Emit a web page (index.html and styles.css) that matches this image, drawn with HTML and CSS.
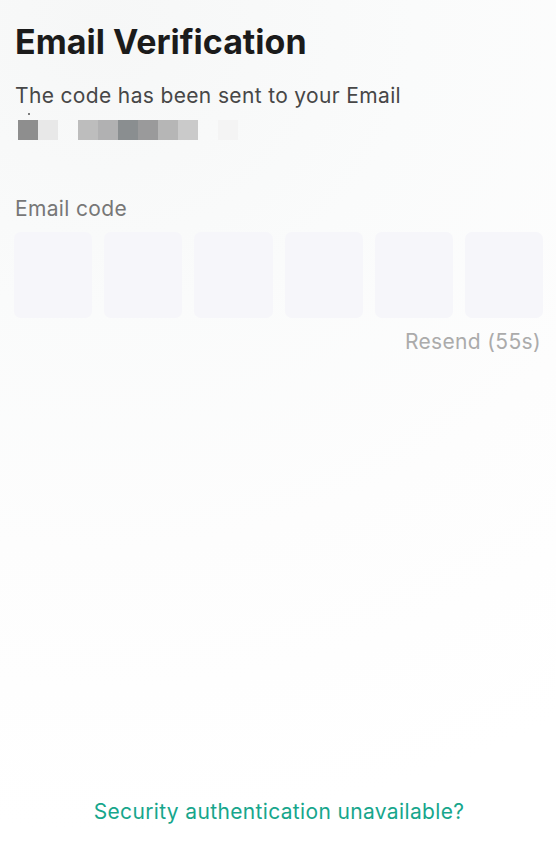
FILE: index.html
```html
<!DOCTYPE html>
<html lang="en">
<head>
<meta charset="utf-8">
<title>Email Verification</title>
<link rel="stylesheet" href="styles.css">
</head>
<body>
<main class="page">
  <h1 class="title">Email Verification</h1>
  <p class="subtitle">The code has been sent to your Email</p>
  <div class="masked">
    <span class="dot"></span>
    <span class="px c1"></span><span class="px c2"></span><span class="px c0"></span><span class="px c3"></span><span class="px c4"></span><span class="px c5"></span><span class="px c6"></span><span class="px c7"></span><span class="px c8"></span><span class="px c0"></span><span class="px c9"></span>
  </div>
  <label class="label">Email code</label>
  <div class="code">
    <div class="cell"></div>
    <div class="cell"></div>
    <div class="cell"></div>
    <div class="cell"></div>
    <div class="cell"></div>
    <div class="cell"></div>
  </div>
  <div class="resend">Resend (55s)</div>
  <a class="help" href="#">Security authentication unavailable?</a>
</main>
</body>
</html>
```

FILE: styles.css
```css
* { box-sizing: border-box; }
html, body { margin: 0; padding: 0; }
body {
  font-family: Inter, "Noto Sans", "Liberation Sans", sans-serif;
  background-color: #ffffff;
  background-image: radial-gradient(ellipse 900px 800px at 100px 30px, #f6f7f7 0%, #fafbfb 35%, #fdfdfd 65%, #ffffff 100%);
  background-repeat: no-repeat;
  color: #1a1a1a;
}
.page {
  min-height: 852px;
  display: flex;
  flex-direction: column;
  padding: 22px 13px 27px 15px;
}
.title {
  margin: 0;
  font-size: 34px;
  line-height: 40px;
  font-weight: 700;
  color: #1b1b1b;
}
.subtitle {
  margin: 21px 0 0 0;
  font-size: 21px;
  line-height: 26px;
  letter-spacing: 0.35px;
  color: #474747;
}
.masked {
  position: relative;
  display: flex;
  margin: 11px 0 0 3px;
  height: 20px;
}
.dot {
  position: absolute;
  left: 10px;
  top: -7px;
  width: 2px;
  height: 2px;
  background: #555;
  border-radius: 1px;
}
.px { width: 20px; height: 20px; }
.c0 { background: transparent; }
.c1 { background: #8e8e8e; }
.c2 { background: #e8e8e8; }
.c3 { background: #bdbdbd; }
.c4 { background: #b1b1b2; }
.c5 { background: #8a8e90; }
.c6 { background: #9a9a9b; }
.c7 { background: #b6b6b6; }
.c8 { background: #cacaca; }
.c9 { background: #f4f4f4; }
.label {
  margin-top: 56px;
  font-size: 21px;
  line-height: 26px;
  letter-spacing: 0.35px;
  color: #777777;
}
.code {
  display: flex;
  gap: 12px;
  margin-top: 10px;
  margin-left: -1px;
}
.cell {
  flex: 1;
  height: 86px;
  border-radius: 7px;
  background: #f6f6fa;
}
.resend {
  align-self: flex-end;
  margin-top: 11px;
  margin-right: 2px;
  font-size: 21px;
  line-height: 26px;
  letter-spacing: 0.35px;
  color: #ababab;
}
.help {
  margin-top: auto;
  align-self: center;
  font-size: 21px;
  line-height: 26px;
  letter-spacing: 0.35px;
  color: #17a68c;
  text-decoration: none;
}
```
